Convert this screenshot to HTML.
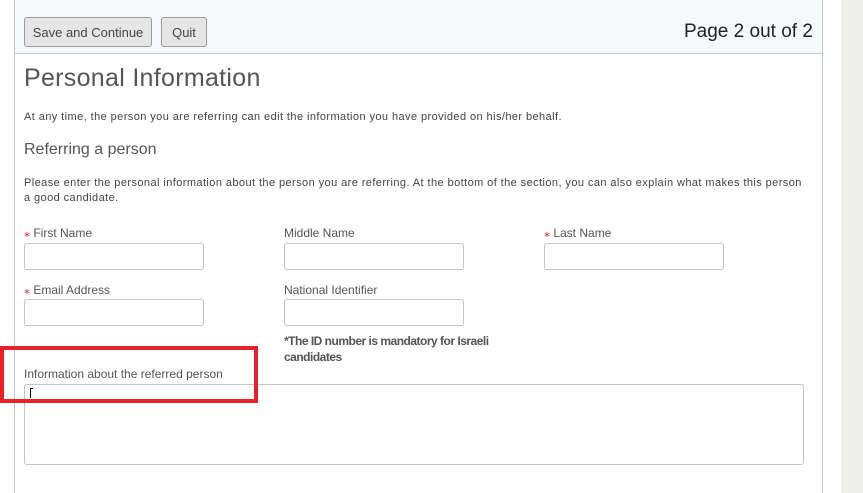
<!DOCTYPE html>
<html><head><style>
body{margin:0;width:863px;height:493px;overflow:hidden;background:#fff;font-family:"Liberation Sans",sans-serif;color:#333;position:relative}
.a{position:absolute}
.side{left:841px;top:0;width:22px;height:493px;background:#eeeeec}
.hdr{left:14px;top:0;width:808px;height:53px;background:#f5f9fc;border-bottom:1px solid #c8c8c8}
.vl{top:0;width:1px;height:493px;background:#c8c8c8}
.btn{height:29px;border:1px solid #9a9a9a;border-radius:3px;background:#e6e6e6;font-size:13px;line-height:29px;text-align:center;color:#444;box-sizing:border-box}
.t{font-size:11px;color:#444;white-space:nowrap;letter-spacing:0.42px}
.lbl{font-size:12px;color:#555;white-space:nowrap}
.in{width:180px;height:27px;border:1px solid #c4c4c4;border-radius:3px;box-sizing:border-box;background:#fff}
.r{color:#e02020}
</style></head><body>
<div class="a side"></div>
<div class="a hdr"></div>
<div class="a vl" style="left:14px"></div>
<div class="a vl" style="left:822px"></div>
<div class="a btn" style="left:24px;top:17px;width:128px;height:30px;line-height:29px">Save and Continue</div>
<div class="a btn" style="left:161px;top:17px;width:46px;height:30px;line-height:29px">Quit</div>
<div class="a" style="left:684px;top:21px;font-size:19px;color:#222;white-space:nowrap">Page 2 out of 2</div>
<div class="a" style="left:24px;top:64px;font-size:25px;color:#555;white-space:nowrap;letter-spacing:0.3px">Personal Information</div>
<div class="a t" style="left:24px;top:111px">At any time, the person you are referring can edit the information you have provided on his/her behalf.</div>
<div class="a" style="left:24px;top:141px;font-size:16px;color:#555;white-space:nowrap">Referring a person</div>
<div class="a t" style="left:24px;top:176px;line-height:15px">Please enter the personal information about the person you are referring. At the bottom of the section, you can also explain what makes this person<br>a good candidate.</div>
<div class="a lbl" style="left:24px;top:226px"><span class="r">⁎</span> First Name</div>
<div class="a lbl" style="left:284px;top:226px">Middle Name</div>
<div class="a lbl" style="left:544px;top:226px"><span class="r">⁎</span> Last Name</div>
<div class="a in" style="left:24px;top:243px"></div>
<div class="a in" style="left:284px;top:243px"></div>
<div class="a in" style="left:544px;top:243px"></div>
<div class="a lbl" style="left:24px;top:283px"><span class="r">⁎</span> Email Address</div>
<div class="a lbl" style="left:284px;top:283px">National Identifier</div>
<div class="a in" style="left:24px;top:299px"></div>
<div class="a in" style="left:284px;top:299px"></div>
<div class="a" style="left:284px;top:333px;font-size:12px;font-weight:bold;color:#555;line-height:16px;white-space:nowrap;letter-spacing:-0.5px">*The ID number is mandatory for Israeli<br>candidates</div>
<div class="a lbl" style="left:24px;top:367px">Information about the referred person</div>
<div class="a" style="left:24px;top:384px;width:780px;height:81px;border:1px solid #c4c4c4;border-radius:3px;box-sizing:border-box"></div>
<div class="a" style="left:30px;top:388px;width:1px;height:10px;background:#000"></div>
<div class="a" style="left:30px;top:388px;width:3px;height:1px;background:#000"></div>
<div class="a" style="left:0;top:346px;width:258px;height:57px;border:4px solid #e8202a;box-sizing:border-box"></div>
</body></html>
